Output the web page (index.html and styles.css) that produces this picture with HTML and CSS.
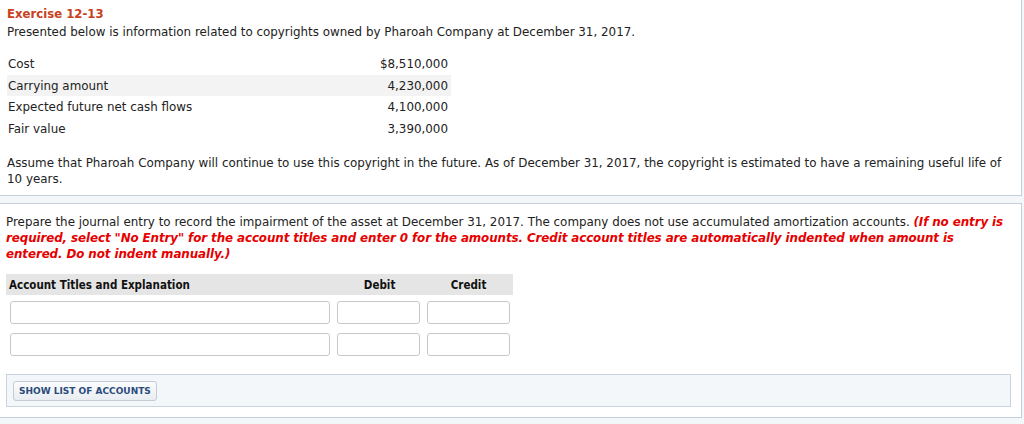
FILE: index.html
```html
<!DOCTYPE html>
<html>
<head>
<meta charset="utf-8">
<link rel="stylesheet" href="styles.css">
</head>
<body>
<div class="panel panel-top">
  <h1 class="title">Exercise 12-13</h1>
  <p class="intro">Presented below is information related to copyrights owned by Pharoah Company at December 31, 2017.</p>
  <table class="data">
    <tr><td class="lbl">Cost</td><td class="val">$8,510,000</td></tr>
    <tr class="alt"><td class="lbl">Carrying amount</td><td class="val">4,230,000</td></tr>
    <tr><td class="lbl">Expected future net cash flows</td><td class="val">4,100,000</td></tr>
    <tr><td class="lbl">Fair value</td><td class="val">3,390,000</td></tr>
  </table>
  <p class="assume">Assume that Pharoah Company will continue to use this copyright in the future. As of December 31, 2017, the copyright is estimated to have a remaining useful life of 10 years.</p>
</div>
<div class="panel panel-bottom">
  <p class="prepare">Prepare the journal entry to record the impairment of the asset at December 31, 2017. The company does not use accumulated amortization accounts. <em class="warn">(If no entry is required, select "No Entry" for the account titles and enter 0 for the amounts. Credit account titles are automatically indented when amount is entered. Do not indent manually.)</em></p>
  <div class="journal">
    <div class="jhead">
      <div class="h-acct">Account Titles and Explanation</div>
      <div class="h-num">Debit</div>
      <div class="h-num">Credit</div>
    </div>
    <div class="jrow">
      <div class="in in-acct"></div>
      <div class="in in-num"></div>
      <div class="in in-num"></div>
    </div>
    <div class="jrow">
      <div class="in in-acct"></div>
      <div class="in in-num"></div>
      <div class="in in-num"></div>
    </div>
  </div>
  <div class="actions">
    <span class="btn">SHOW LIST OF ACCOUNTS</span>
  </div>
</div>
</body>
</html>
```
FILE: styles.css
```css
html, body {
  margin: 0;
  padding: 0;
}
body {
  background: #f4f7fa;
  font-family: "DejaVu Sans", Verdana, sans-serif;
  font-size: 11.9px;
  color: #222;
  width: 1024px;
  height: 424px;
  overflow: hidden;
}
.panel {
  background: #fff;
  width: 1022px;
  box-sizing: border-box;
  border-right: 1px solid #c5cfdc;
}
.panel-top {
  height: 196px;
  border-bottom: 1px solid #c5cfdc;
  padding: 6px 0 0 7px;
}
.panel-bottom {
  margin-top: 7px;
  height: 215px;
  border-top: 1px solid #c5cfdc;
  border-bottom: 1px solid #c5cfdc;
  padding: 10px 0 0 6px;
}
.title {
  margin: 0;
  font-family: "DejaVu Sans Condensed", "DejaVu Sans", sans-serif;
  font-size: 13px;
  font-weight: bold;
  color: #c8401c;
  line-height: 16px;
}
.intro {
  margin: 2px 0 0;
  line-height: 16px;
}
.data {
  margin-top: 13px;
  border-collapse: collapse;
  width: 444px;
}
.data td {
  height: 21.7px;
  padding: 0 3px 0 1px;
  line-height: 16px;
}
.data tr.alt td {
  background: #f3f3f3;
}
.val {
  text-align: right;
}
.assume {
  margin: 15px 0 0;
  line-height: 16px;
  width: 1005px;
}
.prepare {
  margin: 0;
  line-height: 16px;
  width: 1008px;
}
.warn {
  color: #e60000;
  font-weight: bold;
  letter-spacing: -0.1px;
}
.journal {
  margin-top: 12px;
  width: 507px;
}
.jhead {
  display: flex;
  background: #e5e5e5;
  height: 21px;
  align-items: center;
  font-family: "DejaVu Sans Condensed", "DejaVu Sans", sans-serif;
  font-size: 11.5px;
  font-weight: bold;
  color: #111;
}
.h-acct {
  width: 330px;
  padding-left: 3px;
}
.h-num {
  width: 90px;
  text-align: center;
}
.jrow {
  display: flex;
  gap: 7px;
  padding-left: 4px;
  margin-top: 6px;
}
.jrow + .jrow {
  margin-top: 9px;
}
.in {
  height: 23px;
  box-sizing: border-box;
  border: 1px solid #c8c8c8;
  border-radius: 3px;
  background: #fff;
}
.in-acct {
  width: 320px;
}
.in-num {
  width: 83px;
}
.actions {
  margin-top: 18px;
  width: 1005px;
  height: 33px;
  box-sizing: border-box;
  background: #f4f7fa;
  border: 1px solid #c8d3df;
  padding: 6px 0 0 6px;
}
.btn {
  display: inline-block;
  height: 20px;
  box-sizing: border-box;
  padding: 0 5px;
  line-height: 18px;
  font-size: 9px;
  font-weight: bold;
  color: #2b4b7c;
  border: 1px solid #c3cbd4;
  border-radius: 3px;
  background: linear-gradient(#fbfcfd, #e9edf1);
}
```
